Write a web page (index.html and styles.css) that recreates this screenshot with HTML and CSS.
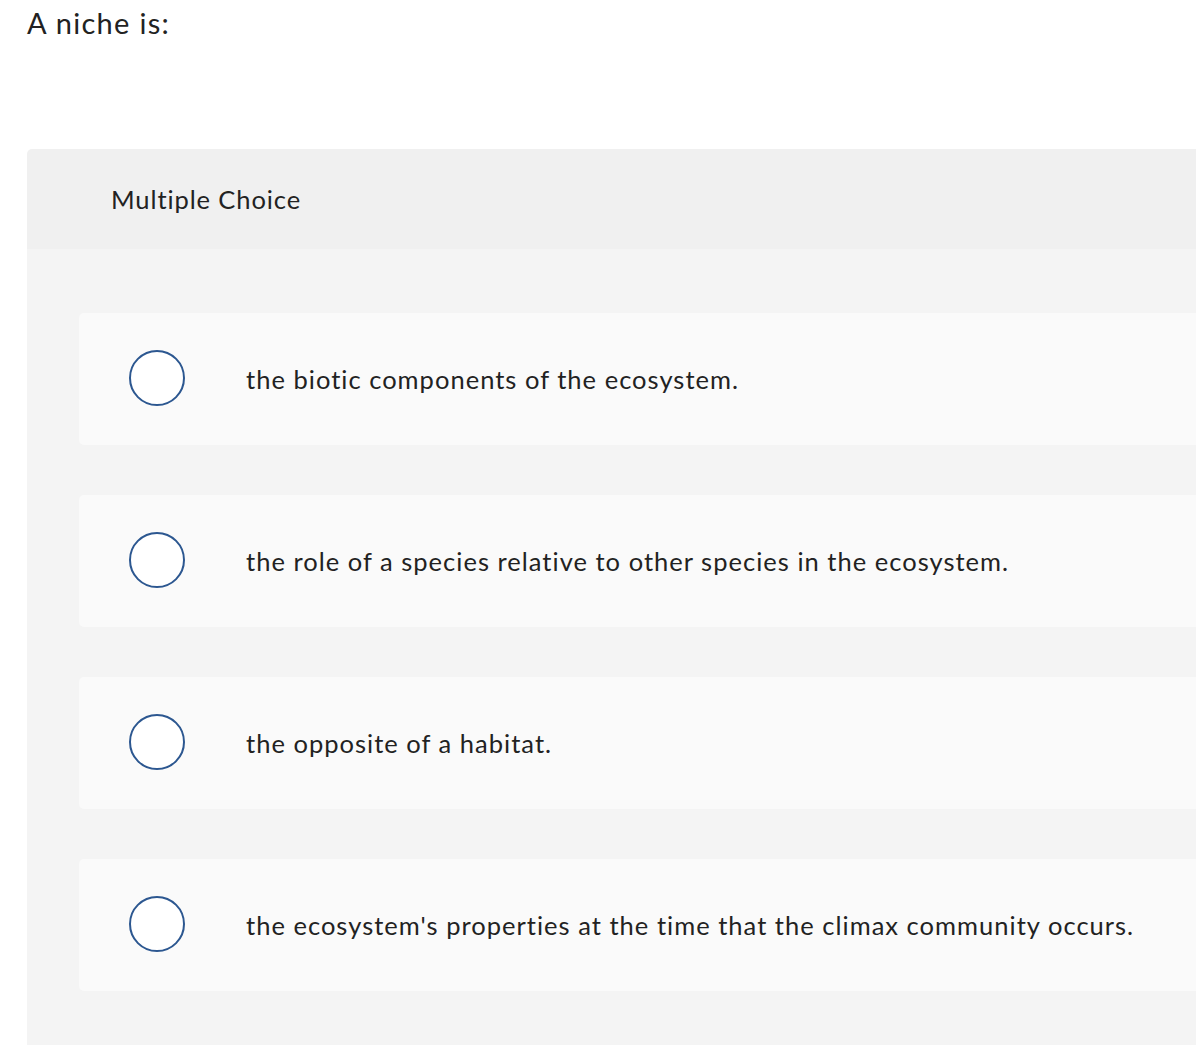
FILE: index.html
```html
<!DOCTYPE html>
<html>
<head>
<meta charset="utf-8">
<link rel="stylesheet" href="styles.css">
</head>
<body>
<div class="page">
  <h1 class="question">A niche is:</h1>
  <div class="panel">
    <div class="panel-head">Multiple Choice</div>
    <div class="panel-body">
      <div class="option"><span class="radio"></span><span class="label">the biotic components of the ecosystem.</span></div>
      <div class="option"><span class="radio"></span><span class="label">the role of a species relative to other species in the ecosystem.</span></div>
      <div class="option"><span class="radio"></span><span class="label">the opposite of a habitat.</span></div>
      <div class="option"><span class="radio"></span><span class="label">the ecosystem's properties at the time that the climax community occurs.</span></div>
    </div>
  </div>
</div>
</body>
</html>
```
FILE: styles.css
```css
html, body {
  margin: 0;
  padding: 0;
  background: #fff;
  overflow: hidden;
}
body {
  font-family: "Lato", "Open Sans", sans-serif;
  font-variant-ligatures: none;
  color: #222;
}
.page {
  width: 1196px;
  height: 1045px;
  overflow: hidden;
}
.question {
  margin: 0;
  padding: 5px 0 0 27px;
  font-size: 29px;
  font-weight: 400;
  letter-spacing: 1.3px;
  line-height: 36px;
  height: 149px;
  box-sizing: border-box;
}
.panel {
  margin-left: 27px;
  width: 1200px;
  border-radius: 5px 0 0 0;
  overflow: hidden;
}
.panel-head {
  background: #f0f0f0;
  height: 100px;
  display: flex;
  align-items: center;
  padding-left: 84px;
  font-size: 25.5px;
  letter-spacing: 0.9px;
}
.panel-body {
  background: #f4f4f4;
  padding: 64px 0 100px 52px;
  display: flex;
  flex-direction: column;
  gap: 50px;
}
.option {
  background: #fafafa;
  height: 132px;
  border-radius: 5px 0 0 5px;
  display: flex;
  align-items: center;
  padding-left: 50px;
}
.radio {
  width: 52px;
  height: 52px;
  border: 2px solid #2c5790;
  border-radius: 50%;
  background: #fff;
  flex: none;
  margin-top: -2px;
}
.label {
  margin-left: 61px;
  font-size: 25.5px;
  letter-spacing: 1.02px;
  margin-top: 0;
}
```
